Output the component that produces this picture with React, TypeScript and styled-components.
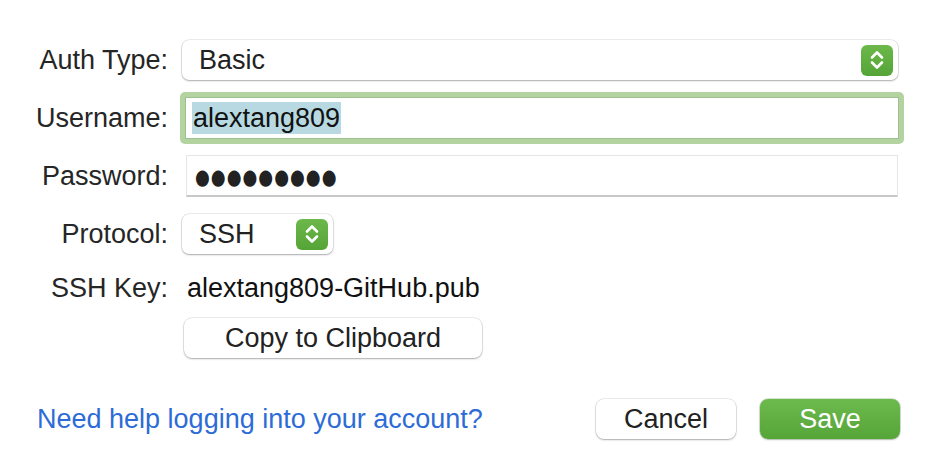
import React from "react";
import styled, { createGlobalStyle } from "styled-components";

const Global = createGlobalStyle`
  html, body { margin: 0; padding: 0; background: #ffffff; }
  body { font-family: "Liberation Sans", Arial, sans-serif; color: #222; -webkit-font-smoothing: antialiased; }
`;

const Page = styled.div`
  width: 930px;
  height: 474px;
  box-sizing: border-box;
  padding: 40px 32px 0 0;
  display: flex;
  flex-direction: column;
`;

const Form = styled.div`
  display: grid;
  grid-template-columns: 168px 1fr;
  column-gap: 14px;
  align-items: center;
`;

const Label = styled.div<{ $mt?: number }>`
  grid-column: 1;
  text-align: right;
  font-size: 27px;
  color: #262626;
  margin-top: ${(p) => p.$mt ?? 0}px;
  line-height: 40px;
`;

const Cell = styled.div<{ $mt?: number; $h?: number }>`
  grid-column: 2;
  margin-top: ${(p) => p.$mt ?? 0}px;
  height: ${(p) => p.$h ?? 40}px;
  display: flex;
  align-items: center;
`;

const Select = styled.div<{ $w?: number }>`
  box-sizing: border-box;
  width: ${(p) => (p.$w ? `${p.$w}px` : "100%")};
  height: 40px;
  border-radius: 7px;
  background: #fff;
  box-shadow: 0 0 0 0.5px rgba(0, 0, 0, 0.14), 0 1px 2px rgba(0, 0, 0, 0.28);
  display: flex;
  align-items: center;
  justify-content: space-between;
  padding: 0 5px 0 17px;
  font-size: 27px;
  color: #222;
`;

const Stepper = styled.div`
  width: 32px;
  height: 31px;
  border-radius: 6px;
  background: linear-gradient(#6cb84a, #55a437);
  display: flex;
  align-items: center;
  justify-content: center;
`;

const FocusRing = styled.div`
  box-sizing: border-box;
  width: calc(100% + 8px);
  margin: 0 -6px 0 -2px;
  height: 52px;
  padding: 5px;
  border-radius: 5px;
  background: #b3d3a1;
  display: flex;
`;

const TextField = styled.div<{ $focused?: boolean }>`
  box-sizing: border-box;
  flex: 1;
  width: 100%;
  height: 42px;
  background: #fff;
  border: 1px solid ${(p) => (p.$focused ? "#9fbf8f" : "#e6e6e6")};
  border-bottom: ${(p) => (p.$focused ? "1px solid #9fbf8f" : "2px solid #c8c8c8")};
  display: flex;
  align-items: center;
  padding-left: ${(p) => (p.$focused ? 6 : 8)}px;
  font-size: 27px;
  color: #111;
`;

const PasswordField = styled(TextField)`
  margin-left: 4px;
`;

const Selected = styled.span`
  background: #b8d9e2;
  padding: 2px 1px;
  line-height: 28px;
`;

const Dots = styled.span`
  font-family: "DejaVu Sans", sans-serif;
  font-size: 17px;
  letter-spacing: 1px;
  color: #222;
  transform: scaleY(1.25);
  display: inline-block;
`;

const Value = styled.div`
  font-size: 27px;
  color: #111;
  padding-left: 5px;
`;

const Button = styled.button<{ $w: number; $primary?: boolean }>`
  box-sizing: border-box;
  width: ${(p) => p.$w}px;
  height: 40px;
  border: none;
  border-radius: 8px;
  font-family: "Liberation Sans", Arial, sans-serif;
  font-size: 27px;
  color: ${(p) => (p.$primary ? "#fff" : "#222")};
  background: ${(p) => (p.$primary ? "linear-gradient(#6db94e, #56a538)" : "#fff")};
  box-shadow: ${(p) =>
    p.$primary
      ? "0 0 0 0.5px rgba(60,120,40,0.4), 0 1px 2px rgba(0,0,0,0.2)"
      : "0 0 0 0.5px rgba(0,0,0,0.14), 0 1px 2px rgba(0,0,0,0.28)"};
  padding: 0;
  cursor: default;
`;

const CopyCell = styled(Cell)`
  padding-left: 2px;
`;

const Footer = styled.div`
  margin-top: 41px;
  display: flex;
  align-items: center;
  padding-left: 37px;
  height: 40px;
`;

const Link = styled.a`
  font-size: 27px;
  color: #2d6cd6;
  text-decoration: none;
  flex: 1;
`;

const ButtonGroup = styled.div`
  display: flex;
  gap: 24px;
  margin-right: -2px;
`;

const Chevrons = () => (
  <svg width="16" height="22" viewBox="0 0 16 22" fill="none">
    <path d="M3 8.5 L8 3.5 L13 8.5" stroke="#fff" strokeWidth="2.6" strokeLinecap="round" strokeLinejoin="round" />
    <path d="M3 13.5 L8 18.5 L13 13.5" stroke="#fff" strokeWidth="2.6" strokeLinecap="round" strokeLinejoin="round" />
  </svg>
);

export default function App() {
  return (
    <>
      <Global />
      <Page>
        <Form>
          <Label>Auth Type:</Label>
          <Cell>
            <Select>
              <span>Basic</span>
              <Stepper>
                <Chevrons />
              </Stepper>
            </Select>
          </Cell>

          <Label $mt={18}>Username:</Label>
          <Cell $mt={18}>
            <FocusRing>
              <TextField $focused>
                <Selected>alextang809</Selected>
              </TextField>
            </FocusRing>
          </Cell>

          <Label $mt={18}>Password:</Label>
          <Cell $mt={18}>
            <PasswordField>
              <Dots>●●●●●●●●●</Dots>
            </PasswordField>
          </Cell>

          <Label $mt={18}>Protocol:</Label>
          <Cell $mt={18}>
            <Select $w={151}>
              <span>SSH</span>
              <Stepper>
                <Chevrons />
              </Stepper>
            </Select>
          </Cell>

          <Label $mt={14}>SSH Key:</Label>
          <Cell $mt={14}>
            <Value>alextang809-GitHub.pub</Value>
          </Cell>

          <div />
          <CopyCell $mt={10} $h={40}>
            <Button $w={298}>Copy to Clipboard</Button>
          </CopyCell>
        </Form>

        <Footer>
          <Link href="#">Need help logging into your account?</Link>
          <ButtonGroup>
            <Button $w={140}>Cancel</Button>
            <Button $w={140} $primary>
              Save
            </Button>
          </ButtonGroup>
        </Footer>
      </Page>
    </>
  );
}
